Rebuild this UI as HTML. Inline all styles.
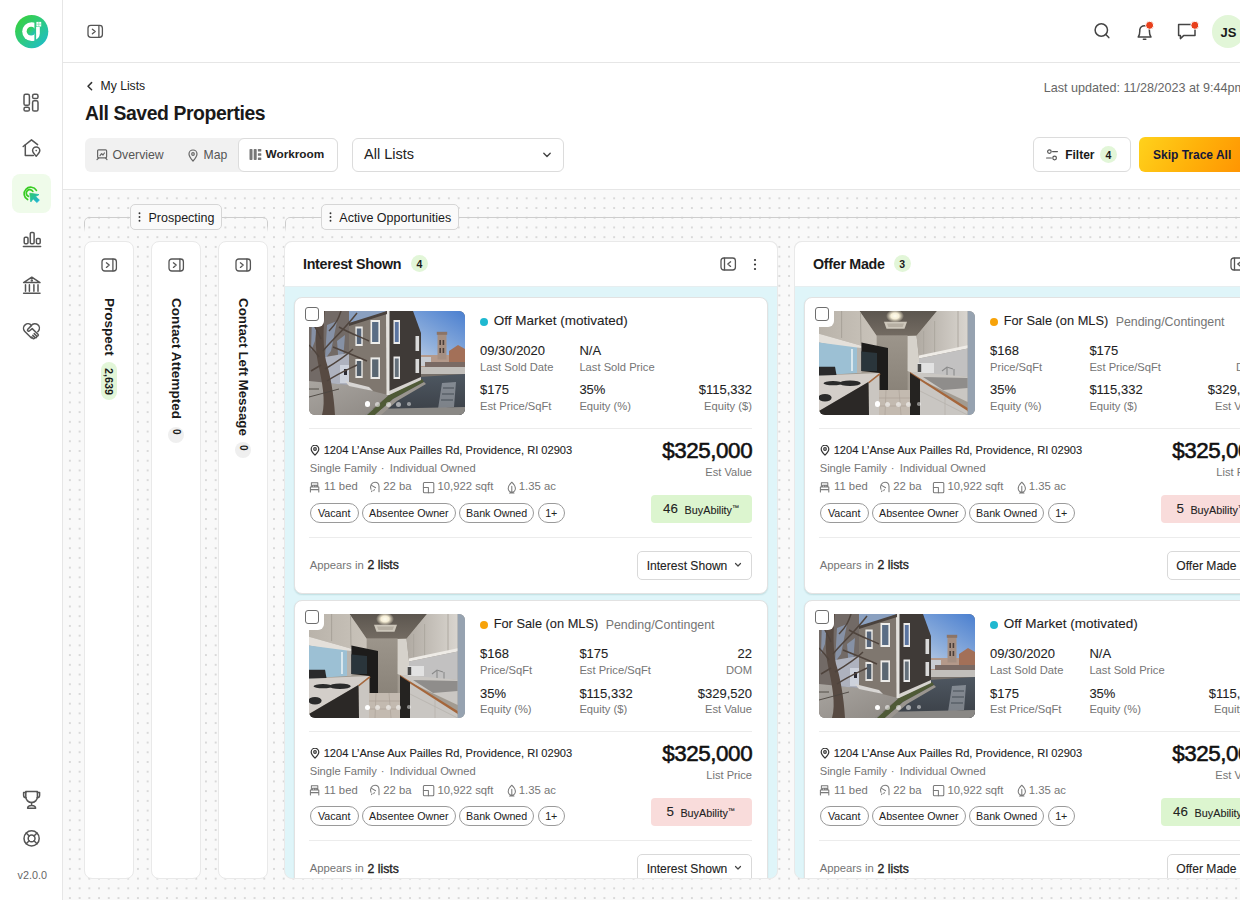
<!DOCTYPE html>
<html><head><meta charset="utf-8">
<style>
*{box-sizing:border-box;margin:0;padding:0}
html,body{width:1240px;height:900px;overflow:hidden;background:#fff;font-family:"Liberation Sans",sans-serif;color:#1a1a1a}
.a{position:absolute}
.t{position:absolute;white-space:nowrap;line-height:1}
#sidebar{position:absolute;left:0;top:0;width:63px;height:900px;background:#fff;border-right:1px solid #e6e6e6}
#topbar{position:absolute;left:63px;top:0;width:1177px;height:63px;border-bottom:1px solid #e6e6e6;background:#fff}
#ws{position:absolute;left:63px;top:189px;width:1177px;height:711px;border-top:1px solid #e6e6e6;
 background-color:#f9f9f9;
 background-image:radial-gradient(circle,#d9d9d9 0.7px,rgba(0,0,0,0) 1.05px);
 background-size:9.71875px 9.71875px;background-position:2.04px 3.44px}
.ico{position:absolute;fill:none;stroke:#555;stroke-width:1.5;stroke-linecap:round;stroke-linejoin:round}
</style></head><body>
<svg width="0" height="0" style="position:absolute">
<defs>
<linearGradient id="sky" x1="1" y1="0" x2="0.2" y2="1"><stop offset="0" stop-color="#4a7fd0"/><stop offset="0.55" stop-color="#90b0dc"/><stop offset="1" stop-color="#d6dde6"/></linearGradient>
<linearGradient id="road" x1="0" y1="0" x2="0" y2="1"><stop offset="0" stop-color="#4e5761"/><stop offset="1" stop-color="#3a3f46"/></linearGradient>
<linearGradient id="walk" x1="0" y1="0" x2="1" y2="1"><stop offset="0" stop-color="#aaa6a1"/><stop offset="1" stop-color="#8d8883"/></linearGradient>
<radialGradient id="lamp" cx="0.5" cy="0.5" r="0.5"><stop offset="0" stop-color="#fffdf0"/><stop offset="0.45" stop-color="#f6eed6"/><stop offset="1" stop-color="#f3ead0" stop-opacity="0"/></radialGradient>
<linearGradient id="ceil" x1="0" y1="0" x2="0" y2="1"><stop offset="0" stop-color="#5c564f"/><stop offset="1" stop-color="#736b62"/></linearGradient>
<linearGradient id="wall" x1="0" y1="0" x2="0" y2="1"><stop offset="0" stop-color="#9c958b"/><stop offset="1" stop-color="#8a8379"/></linearGradient>
<linearGradient id="rcab" x1="0" y1="0" x2="1" y2="0"><stop offset="0" stop-color="#b0aaa2"/><stop offset="1" stop-color="#d9d5cf"/></linearGradient>
<linearGradient id="lcab" x1="0" y1="0" x2="1" y2="0"><stop offset="0" stop-color="#b9b3aa"/><stop offset="1" stop-color="#c9c3ba"/></linearGradient>
<symbol id="house" viewBox="0 0 156 104">
<rect width="156" height="104" fill="#77706a"/>
<rect x="78" y="0" width="78" height="60" fill="url(#sky)"/>
<!-- distant buildings -->
<rect x="111" y="44" width="45" height="13" fill="#b4998a"/>
<path d="M140 40 L149 34 L156 38 V56 H140 Z" fill="#a37058"/>
<rect x="128.5" y="21.5" width="9" height="27" fill="#a58f82"/>
<rect x="127.8" y="20.8" width="10.4" height="3" fill="#8c7467"/>
<rect x="130.4" y="29" width="1.6" height="5" fill="#4c3f3a"/><rect x="133.6" y="29" width="1.6" height="5" fill="#4c3f3a"/>
<rect x="130.4" y="37" width="1.6" height="5" fill="#4c3f3a"/><rect x="133.6" y="37" width="1.6" height="5" fill="#4c3f3a"/>
<rect x="112" y="46" width="10" height="9" fill="#c8ccd2"/>
<rect x="116" y="51" width="40" height="5" fill="#7a6a64"/>
<!-- far sidewalk / road -->
<path d="M111 56 H156 V63 H111 Z" fill="#c2bfbb"/>
<path d="M62 104 L110 66 L156 63 V104 Z" fill="url(#road)"/>
<path d="M133 72 L147 71 L145 96 L129 98 Z" fill="#c9ced4" opacity="0.45"/>
<path d="M134 77 H145 M133 83 H145 M132 89 H144" stroke="#4a525a" stroke-width="1.6" opacity="0.7"/>
<path d="M60 98 L156 96 V104 H56 Z" fill="#8a8885"/>
<!-- sidewalk left -->
<path d="M0 70 L40 68 L80 84 L56 104 H0 Z" fill="url(#walk)"/>
<path d="M58 104 L80 84 L113 68 L115 71 L84 88 L66 104 Z" fill="#4f5a36"/>
<path d="M66 104 L84 88 L115 71 L117 73 L88 90 L72 104 Z" fill="#9a958f"/>
<!-- house front face -->
<path d="M40 12 L78 0 L79 84 L40 74 Z" fill="#7f776f"/>
<!-- house side face -->
<path d="M80 0 H104 L112 22 V68 L80 82 Z" fill="#3f3a37"/>
<path d="M77 0 H80.5 V84 H77.5 Z" fill="#e4e2de"/>
<path d="M80 80 L112 66 V69 L80 84 Z" fill="#d6d3cf"/>
<!-- windows front -->
<rect x="46.4" y="15.5" width="7.3" height="19.5" fill="#ecebe8"/><rect x="47.8" y="17.5" width="4.5" height="15.5" fill="#56657a"/>
<rect x="61.5" y="9" width="9.5" height="24" fill="#efeeeb"/><rect x="63.1" y="11" width="6.3" height="20" fill="#5a6d85"/>
<rect x="46.4" y="48" width="7.3" height="19" fill="#e8e7e4"/><rect x="47.8" y="50" width="4.5" height="15" fill="#505c68"/>
<rect x="61.5" y="46.4" width="9.5" height="21.6" fill="#ecebe8"/><rect x="63.1" y="48.4" width="6.3" height="17.6" fill="#5a6772"/>
<!-- windows side -->
<rect x="84.5" y="9" width="6.5" height="24" fill="#ebebeb"/><rect x="85.8" y="11" width="3.9" height="20" fill="#5a74a0"/>
<rect x="84.5" y="45.5" width="6.5" height="22.5" fill="#ebebeb"/><rect x="85.8" y="47.5" width="3.9" height="18.5" fill="#636f7a"/>
<rect x="106.5" y="25" width="3.6" height="15" fill="#dadada"/><rect x="106.5" y="48" width="3.6" height="14" fill="#dadada"/>
<!-- tree region -->
<path d="M0 0 H78 V3 L40 12 V74 L0 70 Z" fill="#726a66"/>
<path d="M40 0 H78 L60 7 L40 12 Z" fill="#8aa0c0"/><path d="M40 12 L78 0 V3 L40 15 Z" fill="#4a423d"/>
<path d="M3 4 L10 2 L6 30 L2 40 Z M18 14 L28 10 L22 40 L16 48 Z M28 30 L36 24 L34 50 L30 56 Z" fill="#8b9bb5" opacity="0.8"/>
<path d="M16 46 L40 42 V74 L16 72 Z" fill="#aeb2be"/>
<rect x="31" y="54" width="9" height="18" fill="#cdd2dc"/><rect x="35" y="58" width="3" height="6" fill="#2b2b33"/>
<path d="M36 70 L60 76 L64 80 L40 75 Z" fill="#d8d6d4"/>
<path d="M13 104 C17 90 13 70 9 52 C6 38 6 18 9 0 H16 C14 18 14 36 17 50 C21 62 25 84 26 104 Z" fill="#574a42"/>
<path d="M14 40 C22 30 34 20 48 2 M12 28 C8 18 2 10 0 6 M16 58 C26 52 36 46 44 38 M10 46 C6 40 2 36 0 34 M20 20 C28 12 30 6 32 0 M18 70 C30 62 40 58 48 54 M30 16 C40 22 52 26 60 30 M24 36 C34 40 44 44 58 50 M2 60 L12 54" stroke="#4f443d" stroke-width="1.5" fill="none"/>
<path d="M0 78 H10 M0 86 L30 78" stroke="#4b4540" stroke-width="0.9"/>
</symbol>
<symbol id="kitchen" viewBox="0 0 156 104">
<rect width="156" height="104" fill="#a29b91"/>
<path d="M40.5 0 H118 L97.5 24.7 H57.6 Z" fill="url(#ceil)"/>
<rect x="57.6" y="24.5" width="31" height="55" fill="url(#wall)"/>
<path d="M88.6 25 L97.5 24.7 L100 47 V62 L91 61 L88.6 60 Z" fill="#d6d2cb"/>
<ellipse cx="76" cy="5" rx="9" ry="6.5" fill="url(#lamp)"/>
<path d="M65 10.8 H88 L85.5 17.7 H67.5 Z" fill="#cdc7bb"/>
<path d="M68 12.5 H85 L83.6 16 H69.4 Z" fill="#b6afa3"/>
<!-- left upper cabinets -->
<path d="M0 0 H40.5 L57.6 24.7 V39 L0 22.8 Z" fill="url(#lcab)"/>
<path d="M22.6 0 V27 M41.5 1 L42 33" stroke="#a59f96" stroke-width="0.9"/>
<path d="M0 22.8 L57.6 39 L50 41 L0 31.6 Z" fill="#e4e0da"/>
<!-- left window -->
<path d="M0 31.6 L38 36.5 V62 L0 64.6 Z" fill="#9cc0d4"/>
<path d="M33 38 V60" stroke="#e8f0f4" stroke-width="1.6"/>
<path d="M38 36.5 L42.4 37 V62 L38 62 Z" fill="#b8b4ae"/>
<!-- fridge -->
<path d="M42.4 31.6 L69 37 V88.6 L61 90 L60.8 62 L42.4 60 Z" fill="#1d1c1b"/>
<path d="M42.4 40.5 L58 42 V60 L42.4 60 Z" fill="#2a353b"/>
<!-- floor -->
<path d="M54.4 79 H91 L100 104 H54.4 Z" fill="#c3bab0"/>
<path d="M56 87 H95 M55 95 H98 M67 79 L66 104 M80 79 L82 104" stroke="#aaa095" stroke-width="0.6"/>
<!-- left counter / stove -->
<path d="M0 64.6 L60.8 62 L49.4 70.9 L0 100 Z" fill="#d3cec9"/>
<path d="M49.4 70.9 L60.8 62 L61.5 63.5 L50.2 72.6 Z" fill="#a8683c"/>
<path d="M0 55.7 H16 L17.5 64 L0 64.6 Z" fill="#2a2a2b"/>
<ellipse cx="14" cy="72.2" rx="9.5" ry="2.1" fill="#2a2a2a"/>
<ellipse cx="31" cy="72.2" rx="10.8" ry="2.8" fill="#2a2a2a"/>
<ellipse cx="6" cy="86.7" rx="6.6" ry="3.8" fill="#2a2a2a"/>
<path d="M0 100 L49.4 71 L50 104 H0 Z" fill="#2b2826"/>
<path d="M50 72.5 L60 64.6 V104 H50 Z" fill="#cac6c1"/>
<!-- right upper cabinets -->
<path d="M97.5 24.7 L118 0 H148.7 V36.7 L100 46.8 Z" fill="url(#rcab)"/>
<path d="M104.6 20 V45 M115.6 10 V42 M139 0 V37" stroke="#aaa59d" stroke-width="0.9"/>
<path d="M100 44.5 L148.7 34.2 V37.5 L100 47.5 Z" fill="#eeebe6"/>
<!-- right backsplash -->
<path d="M100 47.5 L148.7 37.5 V66 L100 63 Z" fill="#c2c1c1"/>
<rect x="98.7" y="52" width="16.3" height="10" fill="#e2e2e2"/><rect x="98.7" y="53" width="3.5" height="8" fill="#4a4a4a"/>
<path d="M123 60 L128 56 L134 58 M128 56 V66 M135 58 V66" stroke="#8a8a8a" stroke-width="1.1" fill="none"/>
<!-- right counter -->
<path d="M91 60.8 L148.7 65.8 V91 L101 68.4 Z" fill="#cac7c3"/>
<path d="M104 66 L148.7 67 V77 L124 79 Z" fill="#8f8d8b"/>
<path d="M91 61 L148.7 97 V101 L91 64.5 Z" fill="#a5663b"/>
<path d="M101 69.5 L148.7 100 V104 H101 Z" fill="#c9c6c2"/>
<path d="M126 86 V104 M101 80 L148.7 104" stroke="#b4b0aa" stroke-width="0.7"/>
<path d="M91 62 L101 68.5 V104 H91 Z" fill="#252321"/>
<path d="M148.7 0 H156 V104 H148.7 Z" fill="#96a2b0"/>
</symbol>
</defs></svg>


<div id="sidebar">
<svg class="a" style="left:0;top:0" width="62" height="62" viewBox="0 0 62 62">
<defs><linearGradient id="lg" x1="0" y1="0" x2="1" y2="1"><stop offset="0" stop-color="#3ad12f"/><stop offset="0.55" stop-color="#2bc98a"/><stop offset="1" stop-color="#1cb9d6"/></linearGradient>
<clipPath id="lc"><rect x="0" y="0" width="34.4" height="62"/></clipPath></defs>
<circle cx="31.7" cy="31.6" r="16.6" fill="url(#lg)"/>
<circle cx="31.6" cy="31.6" r="9.4" fill="#fff" clip-path="url(#lc)"/>
<circle cx="31.1" cy="31.2" r="4.4" fill="url(#lg)"/>
<path d="M36.1 27 H39.8 V33.5 Q39.4 38 36.1 39.6 Z" fill="#fff"/>
<rect x="36.4" y="21.9" width="4.8" height="4.6" fill="#fff"/>
<path d="M38.8 21.9 V26.5 M36.4 24.2 H41.2" stroke="#7fdcae" stroke-width="0.7"/>
</svg>
<svg class="ico" style="left:0;top:80" width="62" height="40" viewBox="0 80 62 40">
<rect x="24" y="94.3" width="5.4" height="11" rx="1.6"/><rect x="24" y="107.3" width="5.4" height="3.8" rx="1.6"/>
<rect x="32.6" y="94.3" width="5.4" height="4.2" rx="1.6"/><rect x="32.6" y="100.8" width="5.4" height="10.3" rx="1.6"/>
</svg>
<svg class="ico" style="left:0;top:130" width="62" height="36" viewBox="0 130 62 36">
<path d="M23.2 146.5 L31.5 139.8 L37.6 144.6"/><path d="M25.3 145 V155.4 H33.3"/>
<path d="M36.2 156.2 C33.8 153.8 32.6 152.3 32.6 150.6 A3.6 3.6 0 0 1 39.8 150.6 C39.8 152.3 38.6 153.8 36.2 156.2 Z"/><circle cx="36.2" cy="150.6" r="0.8" fill="#555" stroke="none"/>
</svg>
<div class="a" style="left:12.4px;top:174.3px;width:38.6px;height:39px;border-radius:8px;background:#effbea"></div>
<svg class="a" style="left:0;top:170" width="62" height="50" viewBox="0 170 62 50">
<defs><linearGradient id="ag" x1="0" y1="0" x2="1" y2="1"><stop offset="0" stop-color="#30c96a"/><stop offset="1" stop-color="#18b2e0"/></linearGradient></defs>
<path d="M27.6 199.6 A6.6 6.6 0 1 1 36.4 190.4" fill="none" stroke="#37cc22" stroke-width="1.7" stroke-linecap="round"/>
<path d="M28.4 196.4 A3.5 3.5 0 1 1 32.8 191.4" fill="none" stroke="#37cc22" stroke-width="1.7" stroke-linecap="round"/>
<path d="M29.8 193.2 L39 194.6 L35.6 196.5 L39.4 200.1 L36.9 202.5 L33.2 198.9 L30.8 201.9 Z" fill="url(#ag)" stroke="url(#ag)" stroke-width="0.8" stroke-linejoin="round"/>
</svg>
<svg class="ico" style="left:0;top:225" width="62" height="30" viewBox="0 225 62 30">
<rect x="24.2" y="237.2" width="3.8" height="6.6" rx="1.2"/><rect x="30.3" y="232.4" width="3.8" height="11.4" rx="1.2"/><rect x="36.4" y="238.4" width="3.8" height="5.4" rx="1.2"/>
<path d="M23.4 246.4 H40.6"/>
</svg>
<svg class="ico" style="left:0;top:270" width="62" height="30" viewBox="0 270 62 30">
<path d="M23.6 282.6 L31.8 277.2 L40 282.6 Z"/><path d="M25.5 284.8 V291.2 M29.4 284.8 V291.2 M33.9 284.8 V291.2 M38 284.8 V291.2 M23.6 293.2 H40"/>
<circle cx="31.8" cy="280.6" r="0.5" fill="#555"/>
</svg>
<svg class="ico" style="left:0;top:315" width="62" height="30" viewBox="0 315 62 30">
<path d="M31.4 338 L24.6 331.2 A4.4 4.4 0 0 1 31.4 325.4 A4.4 4.4 0 0 1 38.4 331 L37.8 331.6"/>
<path d="M31.4 325.6 L27.8 329.2 A1.2 1.2 0 0 0 29.6 330.8 L32.2 328.6 L38 334.2 A1.1 1.1 0 0 1 36.4 335.8 M36.4 335.8 L34.2 333.6 M36.4 335.8 A1.1 1.1 0 0 1 34.8 337.4 L32.8 335.4 M34.8 337.4 A1.1 1.1 0 0 1 33.2 338.6 L31.6 337"/>
</svg>
<svg class="ico" style="left:0;top:785" width="62" height="30" viewBox="0 785 62 30">
<path d="M25.8 791.5 H37.4 V796.8 A5.8 5.8 0 0 1 25.8 796.8 Z"/><path d="M25.8 792.4 H23.6 V795.2 A2.6 2.6 0 0 0 26 797.8 M37.4 792.4 H39.6 V795.2 A2.6 2.6 0 0 1 37.2 797.8"/>
<path d="M31.6 802.6 V805.4 M27.6 808.2 A4 2.8 0 0 1 35.6 808.2 Z"/>
</svg>
<svg class="ico" style="left:0;top:825" width="62" height="30" viewBox="0 825 62 30">
<circle cx="31.6" cy="838.4" r="7.6"/><circle cx="31.6" cy="838.4" r="3.4"/>
<path d="M29.2 836 L26.2 833 M34 836 L37 833 M29.2 840.8 L26.2 843.8 M34 840.8 L37 843.8"/>
</svg>
<div class="t" style="left:17.5px;top:870px;font-size:10.8px;color:#666;">v2.0.0</div>
</div>
<div id="topbar">
<svg class="ico" style="left:0;top:0;stroke-width:1.3;stroke:#555" width="60" height="62" viewBox="63 0 60 62">
<rect x="88" y="25.4" width="14.4" height="12" rx="2.8"/><path d="M98.9 25.6 V37.2"/><path d="M92.4 29.2 L95.2 31.5 L92.4 33.8"/>
</svg>
<svg class="ico" style="left:1020px;top:0;stroke:#444;stroke-width:1.5" width="157" height="62" viewBox="1083 0 157 62">
<circle cx="1101.3" cy="30" r="6.2"/><path d="M1105.8 34.5 L1108.8 37.6"/>
<path d="M1138.2 37 H1151 C1149.6 35.4 1149.4 34 1149.4 31 V29.6 A4.9 4.9 0 0 0 1139.8 29.6 V31 C1139.8 34 1139.6 35.4 1138.2 37 Z"/><path d="M1143.4 39.2 H1145.8"/>
<path d="M1178.6 24.6 H1195 V35.6 H1183.6 L1180.4 38.6 V35.6 H1178.6 Z"/>
<circle cx="1149.6" cy="25.3" r="4" fill="#e8401c" stroke="#fff" stroke-width="1"/>
<circle cx="1194.8" cy="25.3" r="4" fill="#e8401c" stroke="#fff" stroke-width="1"/>
</svg>
<div class="a" style="left:1148.5px;top:15px;width:32.5px;height:32.5px;border-radius:50%;background:#e2f6d8"></div>
<div class="t" style="left:1157.5px;top:26px;font-size:13px;font-weight:700;color:#1a1a1a">JS</div>
</div>
<div id="header">
<svg class="ico" style="left:80px;top:76px;stroke:#333;stroke-width:1.5" width="16" height="20" viewBox="80 76 16 20">
<path d="M91.6 82.6 L88 86.2 L91.6 89.8"/></svg>
<div class="t" style="left:100.5px;top:80px;font-size:12.2px;color:#222">My Lists</div>
<div class="t" style="left:85px;top:104.1px;font-size:19.4px;font-weight:700;letter-spacing:-0.42px;color:#1a1a1a">All Saved Properties</div>
<div class="a" style="left:85px;top:137.5px;width:253px;height:34.5px;border-radius:6px;background:#f1f1f1"></div>
<div class="a" style="left:238px;top:137.5px;width:100px;height:34.5px;border-radius:6px;background:#fff;border:1px solid #dcdcdc"></div>
<svg class="ico" style="left:0;top:130px;stroke:#666;stroke-width:1.2" width="340" height="50" viewBox="0 130 340 50">
<rect x="97.6" y="149.8" width="9" height="8" rx="1"/><path d="M97 159.6 L98.6 158 M107 159.6 L105.6 158 M100 155.6 L101.6 153.6 L103 155 L104.4 153"/>
<path d="M193 161 C190.4 158.2 189 156.2 189 154 A4 4 0 0 1 197 154 C197 156.2 195.6 158.2 193 161 Z"/><circle cx="193" cy="154" r="1.3"/>
</svg>
<svg class="a" style="left:249px;top:148px" width="13" height="13" viewBox="0 0 13 13">
<rect x="0.5" y="1" width="3" height="11" rx="0.8" fill="#777"/><rect x="4.7" y="1" width="3" height="11" rx="0.8" fill="#777"/>
<rect x="8.9" y="1" width="3.4" height="2.6" rx="0.6" fill="#777"/><rect x="8.9" y="5.2" width="3.4" height="2.6" rx="0.6" fill="#777"/><rect x="8.9" y="9.4" width="3.4" height="2.6" rx="0.6" fill="#777"/>
</svg>
<div class="t" style="left:112.5px;top:149px;font-size:12.3px;color:#555">Overview</div>
<div class="t" style="left:203.5px;top:149px;font-size:12.2px;color:#555">Map</div>
<div class="t" style="left:265.5px;top:149px;font-size:11.8px;font-weight:700;color:#222">Workroom</div>
<div class="a" style="left:352px;top:137.5px;width:211.5px;height:34.5px;border-radius:6px;background:#fff;border:1px solid #dcdcdc"></div>
<div class="t" style="left:364px;top:147px;font-size:14.5px;color:#222">All Lists</div>
<svg class="ico" style="left:540px;top:148px;stroke:#444;stroke-width:1.4" width="14" height="14" viewBox="0 0 14 14"><path d="M3.8 5.2 L7 8.4 L10.2 5.2"/></svg>
<div class="t" style="left:1043.7px;top:82px;font-size:12.6px;color:#666">Last updated: 11/28/2023 at 9:44pm</div>
<div class="a" style="left:1033.3px;top:137.4px;width:98px;height:34.4px;border-radius:6px;background:#fff;border:1px solid #dcdcdc"></div>
<svg class="ico" style="left:1045px;top:148px;stroke:#555;stroke-width:1.2" width="14" height="14" viewBox="0 0 14 14">
<circle cx="4.4" cy="3.6" r="1.8"/><path d="M7.6 3.6 H12.4"/><circle cx="9.6" cy="10" r="1.8"/><path d="M1.6 10 H6.4"/></svg>
<div class="t" style="left:1065.2px;top:149.2px;font-size:12px;font-weight:700;color:#1a1a1a">Filter</div>
<div class="a" style="left:1100px;top:146.3px;width:17px;height:17px;border-radius:50%;background:#e2f6d8"></div>
<div class="t" style="left:1105.6px;top:150.3px;font-size:10.5px;font-weight:700;color:#1a1a1a">4</div>
<div class="a" style="left:1138.6px;top:137.4px;width:120px;height:34.4px;border-radius:6px;background:linear-gradient(120deg,#ffd21c 0%,#ffb20a 45%,#ff8c00 100%)"></div>
<div class="t" style="left:1153px;top:149.2px;font-size:12px;font-weight:700;color:#15173a">Skip Trace All</div>
</div>
<div id="ws"></div>
<div class="a" style="left:84.00px;top:217.00px;width:183.50px;height:15.00px;border:1px solid #cdcdcd;border-bottom:none;border-radius:5px 5px 0 0;-webkit-mask-image:linear-gradient(#000 60%,transparent)"></div>
<div class="a" style="left:284.50px;top:217.00px;width:975.50px;height:15.00px;border:1px solid #cdcdcd;border-bottom:none;border-radius:5px 5px 0 0;-webkit-mask-image:linear-gradient(#000 60%,transparent)"></div>
<div class="a" style="left:129.70px;top:204.20px;width:92.30px;height:25.40px;background:#fafafa;border:1px solid #d6d6d6;border-radius:5px"></div><svg class="a" style="left:135.70px;top:210px" width="8" height="14" viewBox="0 0 8 14"><circle cx="3.5" cy="3.2" r="0.95" fill="#333"/><circle cx="3.5" cy="7" r="0.95" fill="#333"/><circle cx="3.5" cy="10.8" r="0.95" fill="#333"/></svg><div class="t" style="left:148.50px;top:212.02px;font-size:12.5px;font-weight:400;color:#1a1a1a;">Prospecting</div>
<div class="a" style="left:320.50px;top:204.20px;width:138.00px;height:25.40px;background:#fafafa;border:1px solid #d6d6d6;border-radius:5px"></div><svg class="a" style="left:326.50px;top:210px" width="8" height="14" viewBox="0 0 8 14"><circle cx="3.5" cy="3.2" r="0.95" fill="#333"/><circle cx="3.5" cy="7" r="0.95" fill="#333"/><circle cx="3.5" cy="10.8" r="0.95" fill="#333"/></svg><div class="t" style="left:339.30px;top:212.02px;font-size:12.5px;font-weight:400;color:#1a1a1a;">Active Opportunities</div>
<div class="a" style="left:84.00px;top:240.50px;width:50.00px;height:638.50px;background:#fff;border:1px solid #e9e9e9;border-radius:8px"></div><svg class="ico" style="left:100.80px;top:258.4px;stroke:#555;stroke-width:1.3" width="17" height="15" viewBox="0 0 17 15"><rect x="1" y="1" width="14.4" height="12" rx="2.8"/><path d="M11.9 1.2 V12.8"/><path d="M5.4 4.8 L8.2 7.1 L5.4 9.4"/></svg><div class="t" style="left:102.25px;top:297.8px;writing-mode:vertical-rl;font-size:13.5px;font-weight:700;color:#1a1a1a;line-height:13.5px">Prospect</div><div class="a" style="left:100.80px;top:362.10px;width:16.40px;height:38.00px;background:#e2f6d8;border-radius:8px"></div><div class="t" style="left:103.60px;top:367.90px;writing-mode:vertical-rl;font-size:10.8px;font-weight:700;color:#1a1a1a;line-height:10.8px">2,639</div>
<div class="a" style="left:151.00px;top:240.50px;width:50.00px;height:638.50px;background:#fff;border:1px solid #e9e9e9;border-radius:8px"></div><svg class="ico" style="left:167.80px;top:258.4px;stroke:#555;stroke-width:1.3" width="17" height="15" viewBox="0 0 17 15"><rect x="1" y="1" width="14.4" height="12" rx="2.8"/><path d="M11.9 1.2 V12.8"/><path d="M5.4 4.8 L8.2 7.1 L5.4 9.4"/></svg><div class="t" style="left:169.20px;top:297.8px;writing-mode:vertical-rl;font-size:13.6px;font-weight:700;color:#1a1a1a;line-height:13.6px">Contact Attempted</div><div class="a" style="left:167.80px;top:426.50px;width:16.40px;height:16.40px;background:#efefef;border-radius:50%"></div><div class="t" style="left:171.00px;top:429.30px;writing-mode:vertical-rl;font-size:10px;font-weight:700;color:#1a1a1a;line-height:10px">0</div>
<div class="a" style="left:218.00px;top:240.50px;width:50.00px;height:638.50px;background:#fff;border:1px solid #e9e9e9;border-radius:8px"></div><svg class="ico" style="left:234.80px;top:258.4px;stroke:#555;stroke-width:1.3" width="17" height="15" viewBox="0 0 17 15"><rect x="1" y="1" width="14.4" height="12" rx="2.8"/><path d="M11.9 1.2 V12.8"/><path d="M5.4 4.8 L8.2 7.1 L5.4 9.4"/></svg><div class="t" style="left:236.32px;top:297.8px;writing-mode:vertical-rl;font-size:13.35px;font-weight:700;color:#1a1a1a;line-height:13.35px">Contact Left Message</div><div class="a" style="left:234.80px;top:442.00px;width:16.40px;height:16.40px;background:#efefef;border-radius:50%"></div><div class="t" style="left:238.00px;top:444.80px;writing-mode:vertical-rl;font-size:10px;font-weight:700;color:#1a1a1a;line-height:10px">0</div>
<div class="a" style="left:0;top:0;width:1240px;height:879px;clip-path:inset(240px 0 0 0)">
<div class="a" style="left:283.90px;top:240.50px;width:494.00px;height:638.50px;background:#dff5f9;border:1px solid #e9e9e9;border-radius:8px;overflow:hidden"></div><div class="a" style="left:283.90px;top:240.50px;width:494.00px;height:46.00px;background:#fff;border:1px solid #e9e9e9;border-bottom:1px solid #e6eef0;border-radius:8px 8px 0 0"></div><div class="t" style="left:303.00px;top:257.10px;font-size:14.3px;font-weight:700;color:#1a1a1a;letter-spacing:-0.3px">Interest Shown</div><div class="a" style="left:411.10px;top:255.10px;width:17.00px;height:17.00px;background:#e2f6d8;border-radius:50%"></div><div class="t" style="left:416.60px;top:258.71px;font-size:10.5px;font-weight:700;color:#1a1a1a;">4</div><svg class="ico" style="left:719.50px;top:256.6px;stroke:#555;stroke-width:1.3" width="17" height="15" viewBox="0 0 17 15"><rect x="1" y="1" width="14.4" height="12" rx="2.8"/><path d="M4.5 1.2 V12.8"/><path d="M10.6 4.8 L7.8 7.1 L10.6 9.4"/></svg><svg class="a" style="left:750.50px;top:256.6px" width="8" height="15" viewBox="0 0 8 15"><circle cx="4" cy="3" r="1.1" fill="#333"/><circle cx="4" cy="7.5" r="1.1" fill="#333"/><circle cx="4" cy="12" r="1.1" fill="#333"/></svg>
<div class="a" style="left:793.90px;top:240.50px;width:494.00px;height:638.50px;background:#dff5f9;border:1px solid #e9e9e9;border-radius:8px;overflow:hidden"></div><div class="a" style="left:793.90px;top:240.50px;width:494.00px;height:46.00px;background:#fff;border:1px solid #e9e9e9;border-bottom:1px solid #e6eef0;border-radius:8px 8px 0 0"></div><div class="t" style="left:813.00px;top:257.10px;font-size:14.3px;font-weight:700;color:#1a1a1a;letter-spacing:-0.3px">Offer Made</div><div class="a" style="left:893.70px;top:255.10px;width:17.00px;height:17.00px;background:#e2f6d8;border-radius:50%"></div><div class="t" style="left:899.20px;top:258.71px;font-size:10.5px;font-weight:700;color:#1a1a1a;">3</div><svg class="ico" style="left:1229.50px;top:256.6px;stroke:#555;stroke-width:1.3" width="17" height="15" viewBox="0 0 17 15"><rect x="1" y="1" width="14.4" height="12" rx="2.8"/><path d="M4.5 1.2 V12.8"/><path d="M10.6 4.8 L7.8 7.1 L10.6 9.4"/></svg><svg class="a" style="left:1260.50px;top:256.6px" width="8" height="15" viewBox="0 0 8 15"><circle cx="4" cy="3" r="1.1" fill="#333"/><circle cx="4" cy="7.5" r="1.1" fill="#333"/><circle cx="4" cy="12" r="1.1" fill="#333"/></svg>
</div>
<div class="a" style="left:284.5px;top:286.5px;width:492.5px;height:591.5px;overflow:hidden;border-radius:0 0 8px 8px">
<div class="a" style="left:9.90px;top:10.50px;width:473.20px;height:297px;background:#fff;border:1px solid #e2e2e2;border-radius:8px;box-shadow:0 1px 1.5px rgba(0,90,90,0.14)"><div class="a" style="left:0.6px;top:-1px;width:471px;height:296px"><div class="a" style="left:13.5px;top:14px;width:156px;height:104px;border-radius:6px;overflow:hidden"><svg width="156" height="104" viewBox="0 0 156 104"><use href="#house"/></svg></div><div class="a" style="left:69.00px;top:104.40px;width:5.2px;height:5.2px;border-radius:50%;background:rgba(255,255,255,1)"></div><div class="a" style="left:79.50px;top:104.50px;width:5.0px;height:5.0px;border-radius:50%;background:rgba(255,255,255,0.55)"></div><div class="a" style="left:90.00px;top:104.50px;width:5.0px;height:5.0px;border-radius:50%;background:rgba(255,255,255,0.55)"></div><div class="a" style="left:100.50px;top:104.50px;width:5.0px;height:5.0px;border-radius:50%;background:rgba(255,255,255,0.55)"></div><div class="a" style="left:111.20px;top:105.20px;width:3.6px;height:3.6px;border-radius:50%;background:rgba(255,255,255,0.45)"></div><div class="a" style="left:13.5px;top:14px;width:15px;height:15.5px;background:#fff;border-bottom-right-radius:6px"></div><div class="a" style="left:9.5px;top:10px;width:13.8px;height:13.8px;border:1.5px solid #6e6e6e;border-radius:3px;background:#fff"></div><div class="a" style="left:184px;top:20.8px;width:8px;height:8px;border-radius:50%;background:#1fb8d0"></div><div class="t" style="left:197.70px;top:17.17px;font-size:13.5px;font-weight:400;color:#1f1f1f;;-webkit-text-stroke:0.1px #1f1f1f">Off Market (motivated)</div><div class="t" style="left:184.00px;top:47.20px;font-size:13px;font-weight:400;color:#1f1f1f;;-webkit-text-stroke:0.1px #1f1f1f">09/30/2020</div><div class="t" style="left:184.00px;top:64.52px;font-size:11.2px;font-weight:400;color:#757575;">Last Sold Date</div><div class="t" style="left:283.40px;top:47.20px;font-size:13px;font-weight:400;color:#1f1f1f;;-webkit-text-stroke:0.1px #1f1f1f">N/A</div><div class="t" style="left:283.40px;top:64.52px;font-size:11.2px;font-weight:400;color:#757575;">Last Sold Price</div><div class="t" style="left:184.00px;top:86.40px;font-size:13px;font-weight:400;color:#1f1f1f;;-webkit-text-stroke:0.1px #1f1f1f">$175</div><div class="t" style="left:184.00px;top:103.52px;font-size:11.2px;font-weight:400;color:#757575;">Est Price/SqFt</div><div class="t" style="left:283.40px;top:86.40px;font-size:13px;font-weight:400;color:#1f1f1f;;-webkit-text-stroke:0.1px #1f1f1f">35%</div><div class="t" style="left:283.40px;top:103.52px;font-size:11.2px;font-weight:400;color:#757575;">Equity (%)</div><div class="t" style="right:15.00px;top:86.40px;font-size:13px;font-weight:400;color:#1f1f1f;;-webkit-text-stroke:0.1px #1f1f1f">$115,332</div><div class="t" style="right:15.00px;top:103.52px;font-size:11.2px;font-weight:400;color:#757575;">Equity ($)</div><div class="a" style="left:13.50px;top:131.20px;width:442.50px;height:1.00px;background:#ececec"></div><svg class="ico" style="left:14px;top:148px;stroke:#333;stroke-width:1.2" width="10" height="11" viewBox="0 0 10 11"><path d="M5 10.2 C2.4 7.6 1.2 5.8 1.2 4 A3.8 3.8 0 0 1 8.8 4 C8.8 5.8 7.6 7.6 5 10.2 Z"/><circle cx="5" cy="4" r="1.3"/></svg><div class="t" style="left:27.70px;top:147.60px;font-size:11.1px;font-weight:400;color:#222;;-webkit-text-stroke:0.1px #222">1204 L’Anse Aux Pailles Rd, Providence, RI 02903</div><div class="t" style="left:13.70px;top:165.72px;font-size:11.2px;font-weight:400;color:#757575;">Single Family</div><div class="t" style="left:84.80px;top:165.72px;font-size:11.2px;font-weight:400;color:#757575;">·</div><div class="t" style="left:93.80px;top:165.72px;font-size:11.2px;font-weight:400;color:#757575;">Individual Owned</div>
<svg class="ico" style="left:13px;top:184px;stroke:#7a7a7a;stroke-width:1.05" width="260" height="14" viewBox="309 481 260 14">
<path d="M310.4 492 V487 H318.8 V492 M310.4 489.6 H318.8 M311.4 487 V482.8 H317.8 V487 M312.6 487 V485.2 H314.6 V487 M315 487 V485.2 H316.8 V487"/>
<path d="M371 489.2 C369.8 486 371.4 482.2 375 482.2 C377.6 482.2 379 484 379 486.4 V491.8 M372 485.6 L375.6 487.8 M371.6 491.6 L372 490.8 M373.8 490.6 L374.4 489.6"/>
<rect x="423.4" y="482.4" width="10.4" height="10.4" rx="1"/><path d="M423.4 487.4 H428.4 V492.8"/>
<path d="M511.8 482.2 C509 484.8 508.2 487.2 508.2 488.6 A3.6 3.6 0 0 0 515.4 488.6 C515.4 487.2 514.6 484.8 511.8 482.2 Z M511.8 486.2 V493 M509.6 493 H514"/>
</svg><div class="t" style="left:28.00px;top:184.43px;font-size:11.3px;font-weight:400;color:#757575;">11 bed</div><div class="t" style="left:87.30px;top:184.43px;font-size:11.3px;font-weight:400;color:#757575;">22 ba</div><div class="t" style="left:141.50px;top:184.43px;font-size:11.3px;font-weight:400;color:#757575;">10,922 sqft</div><div class="t" style="left:222.80px;top:184.43px;font-size:11.3px;font-weight:400;color:#757575;">1.35 ac</div><div class="a" style="left:13.70px;top:205.50px;width:48.90px;height:20.00px;border:1px solid #9a9a9a;border-radius:10px;background:#fff"></div><div class="t" style="left:13.70px;width:48.90px;text-align:center;top:210.54px;font-size:10.7px;color:#222">Vacant</div><div class="a" style="left:65.70px;top:205.50px;width:94.30px;height:20.00px;border:1px solid #9a9a9a;border-radius:10px;background:#fff"></div><div class="t" style="left:65.70px;width:94.30px;text-align:center;top:210.54px;font-size:10.7px;color:#222">Absentee Owner</div><div class="a" style="left:163.20px;top:205.50px;width:75.00px;height:20.00px;border:1px solid #9a9a9a;border-radius:10px;background:#fff"></div><div class="t" style="left:163.20px;width:75.00px;text-align:center;top:210.54px;font-size:10.7px;color:#222">Bank Owned</div><div class="a" style="left:241.60px;top:205.50px;width:27.40px;height:20.00px;border:1px solid #9a9a9a;border-radius:10px;background:#fff"></div><div class="t" style="left:241.60px;width:27.40px;text-align:center;top:210.54px;font-size:10.7px;color:#222">1+</div><div class="t" style="right:14.80px;top:143.04px;font-size:22.4px;font-weight:400;color:#111;-webkit-text-stroke:0.55px #111;letter-spacing:-0.42px">$325,000</div><div class="t" style="right:15.00px;top:170.10px;font-size:11.1px;font-weight:400;color:#757575;">Est Value</div><div class="a" style="left:355.00px;top:198.00px;width:101.20px;height:28.00px;background:#dcf5cf;border-radius:4px"></div><div class="t" style="left:367.00px;top:205.24px;font-size:13.3px;font-weight:400;color:#222;;-webkit-text-stroke:0.1px #222">46</div><div class="t" style="left:388.60px;top:206.86px;font-size:10.8px;font-weight:400;color:#222;;-webkit-text-stroke:0.1px #222">BuyAbility<span style="font-size:7px;vertical-align:3.5px">™</span></div><div class="a" style="left:13.50px;top:240.00px;width:442.50px;height:1.00px;background:#ececec"></div><div class="t" style="left:13.70px;top:263.23px;font-size:11.3px;font-weight:400;color:#757575;">Appears in</div><div class="t" style="left:71.60px;top:262.47px;font-size:12.2px;font-weight:400;color:#222;-webkit-text-stroke:0.35px #222">2 lists</div><div class="a" style="left:341.50px;top:254.00px;width:114.10px;height:28.50px;border:1px solid #d9d9d9;border-radius:5px;background:#fff"></div><div class="t" style="left:350.70px;top:262.56px;font-size:12.1px;font-weight:400;color:#222;;-webkit-text-stroke:0.1px #222">Interest Shown</div><svg class="ico" style="left:437.00px;top:264px;stroke:#444;stroke-width:1.2" width="10" height="8" viewBox="0 0 10 8"><path d="M2.5 2.5 L5 5 L7.5 2.5"/></svg></div></div>
<div class="a" style="left:9.90px;top:313.70px;width:473.20px;height:297px;background:#fff;border:1px solid #e2e2e2;border-radius:8px;box-shadow:0 1px 1.5px rgba(0,90,90,0.14)"><div class="a" style="left:0.6px;top:-1px;width:471px;height:296px"><div class="a" style="left:13.5px;top:14px;width:156px;height:104px;border-radius:6px;overflow:hidden"><svg width="156" height="104" viewBox="0 0 156 104"><use href="#kitchen"/></svg></div><div class="a" style="left:69.00px;top:104.40px;width:5.2px;height:5.2px;border-radius:50%;background:rgba(255,255,255,1)"></div><div class="a" style="left:79.50px;top:104.50px;width:5.0px;height:5.0px;border-radius:50%;background:rgba(255,255,255,0.55)"></div><div class="a" style="left:90.00px;top:104.50px;width:5.0px;height:5.0px;border-radius:50%;background:rgba(255,255,255,0.55)"></div><div class="a" style="left:100.50px;top:104.50px;width:5.0px;height:5.0px;border-radius:50%;background:rgba(255,255,255,0.55)"></div><div class="a" style="left:111.20px;top:105.20px;width:3.6px;height:3.6px;border-radius:50%;background:rgba(255,255,255,0.45)"></div><div class="a" style="left:13.5px;top:14px;width:15px;height:15.5px;background:#fff;border-bottom-right-radius:6px"></div><div class="a" style="left:9.5px;top:10px;width:13.8px;height:13.8px;border:1.5px solid #6e6e6e;border-radius:3px;background:#fff"></div><div class="a" style="left:184px;top:20.8px;width:8px;height:8px;border-radius:50%;background:#f7a30a"></div><div class="t" style="left:197.70px;top:18.16px;font-size:12.8px;font-weight:400;color:#1f1f1f;;-webkit-text-stroke:0.1px #1f1f1f">For Sale (on MLS)</div><div class="t" style="left:309.70px;top:18.80px;font-size:12.4px;font-weight:400;color:#757575;">Pending/Contingent</div><div class="t" style="left:184.00px;top:47.20px;font-size:13px;font-weight:400;color:#1f1f1f;;-webkit-text-stroke:0.1px #1f1f1f">$168</div><div class="t" style="left:184.00px;top:64.52px;font-size:11.2px;font-weight:400;color:#757575;">Price/SqFt</div><div class="t" style="left:283.40px;top:47.20px;font-size:13px;font-weight:400;color:#1f1f1f;;-webkit-text-stroke:0.1px #1f1f1f">$175</div><div class="t" style="left:283.40px;top:64.52px;font-size:11.2px;font-weight:400;color:#757575;">Est Price/SqFt</div><div class="t" style="right:15.00px;top:47.20px;font-size:13px;font-weight:400;color:#1f1f1f;;-webkit-text-stroke:0.1px #1f1f1f">22</div><div class="t" style="right:15.00px;top:64.52px;font-size:11.2px;font-weight:400;color:#757575;">DOM</div><div class="t" style="left:184.00px;top:86.40px;font-size:13px;font-weight:400;color:#1f1f1f;;-webkit-text-stroke:0.1px #1f1f1f">35%</div><div class="t" style="left:184.00px;top:103.52px;font-size:11.2px;font-weight:400;color:#757575;">Equity (%)</div><div class="t" style="left:283.40px;top:86.40px;font-size:13px;font-weight:400;color:#1f1f1f;;-webkit-text-stroke:0.1px #1f1f1f">$115,332</div><div class="t" style="left:283.40px;top:103.52px;font-size:11.2px;font-weight:400;color:#757575;">Equity ($)</div><div class="t" style="right:15.00px;top:86.40px;font-size:13px;font-weight:400;color:#1f1f1f;;-webkit-text-stroke:0.1px #1f1f1f">$329,520</div><div class="t" style="right:15.00px;top:103.52px;font-size:11.2px;font-weight:400;color:#757575;">Est Value</div><div class="a" style="left:13.50px;top:131.20px;width:442.50px;height:1.00px;background:#ececec"></div><svg class="ico" style="left:14px;top:148px;stroke:#333;stroke-width:1.2" width="10" height="11" viewBox="0 0 10 11"><path d="M5 10.2 C2.4 7.6 1.2 5.8 1.2 4 A3.8 3.8 0 0 1 8.8 4 C8.8 5.8 7.6 7.6 5 10.2 Z"/><circle cx="5" cy="4" r="1.3"/></svg><div class="t" style="left:27.70px;top:147.60px;font-size:11.1px;font-weight:400;color:#222;;-webkit-text-stroke:0.1px #222">1204 L’Anse Aux Pailles Rd, Providence, RI 02903</div><div class="t" style="left:13.70px;top:165.72px;font-size:11.2px;font-weight:400;color:#757575;">Single Family</div><div class="t" style="left:84.80px;top:165.72px;font-size:11.2px;font-weight:400;color:#757575;">·</div><div class="t" style="left:93.80px;top:165.72px;font-size:11.2px;font-weight:400;color:#757575;">Individual Owned</div>
<svg class="ico" style="left:13px;top:184px;stroke:#7a7a7a;stroke-width:1.05" width="260" height="14" viewBox="309 481 260 14">
<path d="M310.4 492 V487 H318.8 V492 M310.4 489.6 H318.8 M311.4 487 V482.8 H317.8 V487 M312.6 487 V485.2 H314.6 V487 M315 487 V485.2 H316.8 V487"/>
<path d="M371 489.2 C369.8 486 371.4 482.2 375 482.2 C377.6 482.2 379 484 379 486.4 V491.8 M372 485.6 L375.6 487.8 M371.6 491.6 L372 490.8 M373.8 490.6 L374.4 489.6"/>
<rect x="423.4" y="482.4" width="10.4" height="10.4" rx="1"/><path d="M423.4 487.4 H428.4 V492.8"/>
<path d="M511.8 482.2 C509 484.8 508.2 487.2 508.2 488.6 A3.6 3.6 0 0 0 515.4 488.6 C515.4 487.2 514.6 484.8 511.8 482.2 Z M511.8 486.2 V493 M509.6 493 H514"/>
</svg><div class="t" style="left:28.00px;top:184.43px;font-size:11.3px;font-weight:400;color:#757575;">11 bed</div><div class="t" style="left:87.30px;top:184.43px;font-size:11.3px;font-weight:400;color:#757575;">22 ba</div><div class="t" style="left:141.50px;top:184.43px;font-size:11.3px;font-weight:400;color:#757575;">10,922 sqft</div><div class="t" style="left:222.80px;top:184.43px;font-size:11.3px;font-weight:400;color:#757575;">1.35 ac</div><div class="a" style="left:13.70px;top:205.50px;width:48.90px;height:20.00px;border:1px solid #9a9a9a;border-radius:10px;background:#fff"></div><div class="t" style="left:13.70px;width:48.90px;text-align:center;top:210.54px;font-size:10.7px;color:#222">Vacant</div><div class="a" style="left:65.70px;top:205.50px;width:94.30px;height:20.00px;border:1px solid #9a9a9a;border-radius:10px;background:#fff"></div><div class="t" style="left:65.70px;width:94.30px;text-align:center;top:210.54px;font-size:10.7px;color:#222">Absentee Owner</div><div class="a" style="left:163.20px;top:205.50px;width:75.00px;height:20.00px;border:1px solid #9a9a9a;border-radius:10px;background:#fff"></div><div class="t" style="left:163.20px;width:75.00px;text-align:center;top:210.54px;font-size:10.7px;color:#222">Bank Owned</div><div class="a" style="left:241.60px;top:205.50px;width:27.40px;height:20.00px;border:1px solid #9a9a9a;border-radius:10px;background:#fff"></div><div class="t" style="left:241.60px;width:27.40px;text-align:center;top:210.54px;font-size:10.7px;color:#222">1+</div><div class="t" style="right:14.80px;top:143.04px;font-size:22.4px;font-weight:400;color:#111;-webkit-text-stroke:0.55px #111;letter-spacing:-0.42px">$325,000</div><div class="t" style="right:15.00px;top:170.10px;font-size:11.1px;font-weight:400;color:#757575;">List Price</div><div class="a" style="left:355.00px;top:198.00px;width:101.20px;height:28.00px;background:#f9dcdb;border-radius:4px"></div><div class="t" style="left:370.60px;top:205.24px;font-size:13.3px;font-weight:400;color:#222;;-webkit-text-stroke:0.1px #222">5</div><div class="t" style="left:384.40px;top:206.86px;font-size:10.8px;font-weight:400;color:#222;;-webkit-text-stroke:0.1px #222">BuyAbility<span style="font-size:7px;vertical-align:3.5px">™</span></div><div class="a" style="left:13.50px;top:240.00px;width:442.50px;height:1.00px;background:#ececec"></div><div class="t" style="left:13.70px;top:263.23px;font-size:11.3px;font-weight:400;color:#757575;">Appears in</div><div class="t" style="left:71.60px;top:262.47px;font-size:12.2px;font-weight:400;color:#222;-webkit-text-stroke:0.35px #222">2 lists</div><div class="a" style="left:341.50px;top:254.00px;width:114.10px;height:28.50px;border:1px solid #d9d9d9;border-radius:5px;background:#fff"></div><div class="t" style="left:350.70px;top:262.56px;font-size:12.1px;font-weight:400;color:#222;;-webkit-text-stroke:0.1px #222">Interest Shown</div><svg class="ico" style="left:437.00px;top:264px;stroke:#444;stroke-width:1.2" width="10" height="8" viewBox="0 0 10 8"><path d="M2.5 2.5 L5 5 L7.5 2.5"/></svg></div></div>
</div>
<div class="a" style="left:794.5px;top:286.5px;width:460px;height:591.5px;overflow:hidden;border-radius:0 0 0 8px">
<div class="a" style="left:9.90px;top:10.50px;width:473.20px;height:297px;background:#fff;border:1px solid #e2e2e2;border-radius:8px;box-shadow:0 1px 1.5px rgba(0,90,90,0.14)"><div class="a" style="left:0.6px;top:-1px;width:471px;height:296px"><div class="a" style="left:13.5px;top:14px;width:156px;height:104px;border-radius:6px;overflow:hidden"><svg width="156" height="104" viewBox="0 0 156 104"><use href="#kitchen"/></svg></div><div class="a" style="left:69.00px;top:104.40px;width:5.2px;height:5.2px;border-radius:50%;background:rgba(255,255,255,1)"></div><div class="a" style="left:79.50px;top:104.50px;width:5.0px;height:5.0px;border-radius:50%;background:rgba(255,255,255,0.55)"></div><div class="a" style="left:90.00px;top:104.50px;width:5.0px;height:5.0px;border-radius:50%;background:rgba(255,255,255,0.55)"></div><div class="a" style="left:100.50px;top:104.50px;width:5.0px;height:5.0px;border-radius:50%;background:rgba(255,255,255,0.55)"></div><div class="a" style="left:111.20px;top:105.20px;width:3.6px;height:3.6px;border-radius:50%;background:rgba(255,255,255,0.45)"></div><div class="a" style="left:13.5px;top:14px;width:15px;height:15.5px;background:#fff;border-bottom-right-radius:6px"></div><div class="a" style="left:9.5px;top:10px;width:13.8px;height:13.8px;border:1.5px solid #6e6e6e;border-radius:3px;background:#fff"></div><div class="a" style="left:184px;top:20.8px;width:8px;height:8px;border-radius:50%;background:#f7a30a"></div><div class="t" style="left:197.70px;top:18.16px;font-size:12.8px;font-weight:400;color:#1f1f1f;;-webkit-text-stroke:0.1px #1f1f1f">For Sale (on MLS)</div><div class="t" style="left:309.70px;top:18.80px;font-size:12.4px;font-weight:400;color:#757575;">Pending/Contingent</div><div class="t" style="left:184.00px;top:47.20px;font-size:13px;font-weight:400;color:#1f1f1f;;-webkit-text-stroke:0.1px #1f1f1f">$168</div><div class="t" style="left:184.00px;top:64.52px;font-size:11.2px;font-weight:400;color:#757575;">Price/SqFt</div><div class="t" style="left:283.40px;top:47.20px;font-size:13px;font-weight:400;color:#1f1f1f;;-webkit-text-stroke:0.1px #1f1f1f">$175</div><div class="t" style="left:283.40px;top:64.52px;font-size:11.2px;font-weight:400;color:#757575;">Est Price/SqFt</div><div class="t" style="right:15.00px;top:47.20px;font-size:13px;font-weight:400;color:#1f1f1f;;-webkit-text-stroke:0.1px #1f1f1f">22</div><div class="t" style="right:15.00px;top:64.52px;font-size:11.2px;font-weight:400;color:#757575;">DOM</div><div class="t" style="left:184.00px;top:86.40px;font-size:13px;font-weight:400;color:#1f1f1f;;-webkit-text-stroke:0.1px #1f1f1f">35%</div><div class="t" style="left:184.00px;top:103.52px;font-size:11.2px;font-weight:400;color:#757575;">Equity (%)</div><div class="t" style="left:283.40px;top:86.40px;font-size:13px;font-weight:400;color:#1f1f1f;;-webkit-text-stroke:0.1px #1f1f1f">$115,332</div><div class="t" style="left:283.40px;top:103.52px;font-size:11.2px;font-weight:400;color:#757575;">Equity ($)</div><div class="t" style="right:15.00px;top:86.40px;font-size:13px;font-weight:400;color:#1f1f1f;;-webkit-text-stroke:0.1px #1f1f1f">$329,520</div><div class="t" style="right:15.00px;top:103.52px;font-size:11.2px;font-weight:400;color:#757575;">Est Value</div><div class="a" style="left:13.50px;top:131.20px;width:442.50px;height:1.00px;background:#ececec"></div><svg class="ico" style="left:14px;top:148px;stroke:#333;stroke-width:1.2" width="10" height="11" viewBox="0 0 10 11"><path d="M5 10.2 C2.4 7.6 1.2 5.8 1.2 4 A3.8 3.8 0 0 1 8.8 4 C8.8 5.8 7.6 7.6 5 10.2 Z"/><circle cx="5" cy="4" r="1.3"/></svg><div class="t" style="left:27.70px;top:147.60px;font-size:11.1px;font-weight:400;color:#222;;-webkit-text-stroke:0.1px #222">1204 L’Anse Aux Pailles Rd, Providence, RI 02903</div><div class="t" style="left:13.70px;top:165.72px;font-size:11.2px;font-weight:400;color:#757575;">Single Family</div><div class="t" style="left:84.80px;top:165.72px;font-size:11.2px;font-weight:400;color:#757575;">·</div><div class="t" style="left:93.80px;top:165.72px;font-size:11.2px;font-weight:400;color:#757575;">Individual Owned</div>
<svg class="ico" style="left:13px;top:184px;stroke:#7a7a7a;stroke-width:1.05" width="260" height="14" viewBox="309 481 260 14">
<path d="M310.4 492 V487 H318.8 V492 M310.4 489.6 H318.8 M311.4 487 V482.8 H317.8 V487 M312.6 487 V485.2 H314.6 V487 M315 487 V485.2 H316.8 V487"/>
<path d="M371 489.2 C369.8 486 371.4 482.2 375 482.2 C377.6 482.2 379 484 379 486.4 V491.8 M372 485.6 L375.6 487.8 M371.6 491.6 L372 490.8 M373.8 490.6 L374.4 489.6"/>
<rect x="423.4" y="482.4" width="10.4" height="10.4" rx="1"/><path d="M423.4 487.4 H428.4 V492.8"/>
<path d="M511.8 482.2 C509 484.8 508.2 487.2 508.2 488.6 A3.6 3.6 0 0 0 515.4 488.6 C515.4 487.2 514.6 484.8 511.8 482.2 Z M511.8 486.2 V493 M509.6 493 H514"/>
</svg><div class="t" style="left:28.00px;top:184.43px;font-size:11.3px;font-weight:400;color:#757575;">11 bed</div><div class="t" style="left:87.30px;top:184.43px;font-size:11.3px;font-weight:400;color:#757575;">22 ba</div><div class="t" style="left:141.50px;top:184.43px;font-size:11.3px;font-weight:400;color:#757575;">10,922 sqft</div><div class="t" style="left:222.80px;top:184.43px;font-size:11.3px;font-weight:400;color:#757575;">1.35 ac</div><div class="a" style="left:13.70px;top:205.50px;width:48.90px;height:20.00px;border:1px solid #9a9a9a;border-radius:10px;background:#fff"></div><div class="t" style="left:13.70px;width:48.90px;text-align:center;top:210.54px;font-size:10.7px;color:#222">Vacant</div><div class="a" style="left:65.70px;top:205.50px;width:94.30px;height:20.00px;border:1px solid #9a9a9a;border-radius:10px;background:#fff"></div><div class="t" style="left:65.70px;width:94.30px;text-align:center;top:210.54px;font-size:10.7px;color:#222">Absentee Owner</div><div class="a" style="left:163.20px;top:205.50px;width:75.00px;height:20.00px;border:1px solid #9a9a9a;border-radius:10px;background:#fff"></div><div class="t" style="left:163.20px;width:75.00px;text-align:center;top:210.54px;font-size:10.7px;color:#222">Bank Owned</div><div class="a" style="left:241.60px;top:205.50px;width:27.40px;height:20.00px;border:1px solid #9a9a9a;border-radius:10px;background:#fff"></div><div class="t" style="left:241.60px;width:27.40px;text-align:center;top:210.54px;font-size:10.7px;color:#222">1+</div><div class="t" style="right:14.80px;top:143.04px;font-size:22.4px;font-weight:400;color:#111;-webkit-text-stroke:0.55px #111;letter-spacing:-0.42px">$325,000</div><div class="t" style="right:15.00px;top:170.10px;font-size:11.1px;font-weight:400;color:#757575;">List Price</div><div class="a" style="left:355.00px;top:198.00px;width:101.20px;height:28.00px;background:#f9dcdb;border-radius:4px"></div><div class="t" style="left:370.60px;top:205.24px;font-size:13.3px;font-weight:400;color:#222;;-webkit-text-stroke:0.1px #222">5</div><div class="t" style="left:384.40px;top:206.86px;font-size:10.8px;font-weight:400;color:#222;;-webkit-text-stroke:0.1px #222">BuyAbility<span style="font-size:7px;vertical-align:3.5px">™</span></div><div class="a" style="left:13.50px;top:240.00px;width:442.50px;height:1.00px;background:#ececec"></div><div class="t" style="left:13.70px;top:263.23px;font-size:11.3px;font-weight:400;color:#757575;">Appears in</div><div class="t" style="left:71.60px;top:262.47px;font-size:12.2px;font-weight:400;color:#222;-webkit-text-stroke:0.35px #222">2 lists</div><div class="a" style="left:361.10px;top:254.00px;width:94.50px;height:28.50px;border:1px solid #d9d9d9;border-radius:5px;background:#fff"></div><div class="t" style="left:370.30px;top:262.56px;font-size:12.1px;font-weight:400;color:#222;;-webkit-text-stroke:0.1px #222">Offer Made</div><svg class="ico" style="left:456.60px;top:264px;stroke:#444;stroke-width:1.2" width="10" height="8" viewBox="0 0 10 8"><path d="M2.5 2.5 L5 5 L7.5 2.5"/></svg></div></div>
<div class="a" style="left:9.90px;top:313.70px;width:473.20px;height:297px;background:#fff;border:1px solid #e2e2e2;border-radius:8px;box-shadow:0 1px 1.5px rgba(0,90,90,0.14)"><div class="a" style="left:0.6px;top:-1px;width:471px;height:296px"><div class="a" style="left:13.5px;top:14px;width:156px;height:104px;border-radius:6px;overflow:hidden"><svg width="156" height="104" viewBox="0 0 156 104"><use href="#house"/></svg></div><div class="a" style="left:69.00px;top:104.40px;width:5.2px;height:5.2px;border-radius:50%;background:rgba(255,255,255,1)"></div><div class="a" style="left:79.50px;top:104.50px;width:5.0px;height:5.0px;border-radius:50%;background:rgba(255,255,255,0.55)"></div><div class="a" style="left:90.00px;top:104.50px;width:5.0px;height:5.0px;border-radius:50%;background:rgba(255,255,255,0.55)"></div><div class="a" style="left:100.50px;top:104.50px;width:5.0px;height:5.0px;border-radius:50%;background:rgba(255,255,255,0.55)"></div><div class="a" style="left:111.20px;top:105.20px;width:3.6px;height:3.6px;border-radius:50%;background:rgba(255,255,255,0.45)"></div><div class="a" style="left:13.5px;top:14px;width:15px;height:15.5px;background:#fff;border-bottom-right-radius:6px"></div><div class="a" style="left:9.5px;top:10px;width:13.8px;height:13.8px;border:1.5px solid #6e6e6e;border-radius:3px;background:#fff"></div><div class="a" style="left:184px;top:20.8px;width:8px;height:8px;border-radius:50%;background:#1fb8d0"></div><div class="t" style="left:197.70px;top:17.17px;font-size:13.5px;font-weight:400;color:#1f1f1f;;-webkit-text-stroke:0.1px #1f1f1f">Off Market (motivated)</div><div class="t" style="left:184.00px;top:47.20px;font-size:13px;font-weight:400;color:#1f1f1f;;-webkit-text-stroke:0.1px #1f1f1f">09/30/2020</div><div class="t" style="left:184.00px;top:64.52px;font-size:11.2px;font-weight:400;color:#757575;">Last Sold Date</div><div class="t" style="left:283.40px;top:47.20px;font-size:13px;font-weight:400;color:#1f1f1f;;-webkit-text-stroke:0.1px #1f1f1f">N/A</div><div class="t" style="left:283.40px;top:64.52px;font-size:11.2px;font-weight:400;color:#757575;">Last Sold Price</div><div class="t" style="left:184.00px;top:86.40px;font-size:13px;font-weight:400;color:#1f1f1f;;-webkit-text-stroke:0.1px #1f1f1f">$175</div><div class="t" style="left:184.00px;top:103.52px;font-size:11.2px;font-weight:400;color:#757575;">Est Price/SqFt</div><div class="t" style="left:283.40px;top:86.40px;font-size:13px;font-weight:400;color:#1f1f1f;;-webkit-text-stroke:0.1px #1f1f1f">35%</div><div class="t" style="left:283.40px;top:103.52px;font-size:11.2px;font-weight:400;color:#757575;">Equity (%)</div><div class="t" style="right:15.00px;top:86.40px;font-size:13px;font-weight:400;color:#1f1f1f;;-webkit-text-stroke:0.1px #1f1f1f">$115,332</div><div class="t" style="right:15.00px;top:103.52px;font-size:11.2px;font-weight:400;color:#757575;">Equity ($)</div><div class="a" style="left:13.50px;top:131.20px;width:442.50px;height:1.00px;background:#ececec"></div><svg class="ico" style="left:14px;top:148px;stroke:#333;stroke-width:1.2" width="10" height="11" viewBox="0 0 10 11"><path d="M5 10.2 C2.4 7.6 1.2 5.8 1.2 4 A3.8 3.8 0 0 1 8.8 4 C8.8 5.8 7.6 7.6 5 10.2 Z"/><circle cx="5" cy="4" r="1.3"/></svg><div class="t" style="left:27.70px;top:147.60px;font-size:11.1px;font-weight:400;color:#222;;-webkit-text-stroke:0.1px #222">1204 L’Anse Aux Pailles Rd, Providence, RI 02903</div><div class="t" style="left:13.70px;top:165.72px;font-size:11.2px;font-weight:400;color:#757575;">Single Family</div><div class="t" style="left:84.80px;top:165.72px;font-size:11.2px;font-weight:400;color:#757575;">·</div><div class="t" style="left:93.80px;top:165.72px;font-size:11.2px;font-weight:400;color:#757575;">Individual Owned</div>
<svg class="ico" style="left:13px;top:184px;stroke:#7a7a7a;stroke-width:1.05" width="260" height="14" viewBox="309 481 260 14">
<path d="M310.4 492 V487 H318.8 V492 M310.4 489.6 H318.8 M311.4 487 V482.8 H317.8 V487 M312.6 487 V485.2 H314.6 V487 M315 487 V485.2 H316.8 V487"/>
<path d="M371 489.2 C369.8 486 371.4 482.2 375 482.2 C377.6 482.2 379 484 379 486.4 V491.8 M372 485.6 L375.6 487.8 M371.6 491.6 L372 490.8 M373.8 490.6 L374.4 489.6"/>
<rect x="423.4" y="482.4" width="10.4" height="10.4" rx="1"/><path d="M423.4 487.4 H428.4 V492.8"/>
<path d="M511.8 482.2 C509 484.8 508.2 487.2 508.2 488.6 A3.6 3.6 0 0 0 515.4 488.6 C515.4 487.2 514.6 484.8 511.8 482.2 Z M511.8 486.2 V493 M509.6 493 H514"/>
</svg><div class="t" style="left:28.00px;top:184.43px;font-size:11.3px;font-weight:400;color:#757575;">11 bed</div><div class="t" style="left:87.30px;top:184.43px;font-size:11.3px;font-weight:400;color:#757575;">22 ba</div><div class="t" style="left:141.50px;top:184.43px;font-size:11.3px;font-weight:400;color:#757575;">10,922 sqft</div><div class="t" style="left:222.80px;top:184.43px;font-size:11.3px;font-weight:400;color:#757575;">1.35 ac</div><div class="a" style="left:13.70px;top:205.50px;width:48.90px;height:20.00px;border:1px solid #9a9a9a;border-radius:10px;background:#fff"></div><div class="t" style="left:13.70px;width:48.90px;text-align:center;top:210.54px;font-size:10.7px;color:#222">Vacant</div><div class="a" style="left:65.70px;top:205.50px;width:94.30px;height:20.00px;border:1px solid #9a9a9a;border-radius:10px;background:#fff"></div><div class="t" style="left:65.70px;width:94.30px;text-align:center;top:210.54px;font-size:10.7px;color:#222">Absentee Owner</div><div class="a" style="left:163.20px;top:205.50px;width:75.00px;height:20.00px;border:1px solid #9a9a9a;border-radius:10px;background:#fff"></div><div class="t" style="left:163.20px;width:75.00px;text-align:center;top:210.54px;font-size:10.7px;color:#222">Bank Owned</div><div class="a" style="left:241.60px;top:205.50px;width:27.40px;height:20.00px;border:1px solid #9a9a9a;border-radius:10px;background:#fff"></div><div class="t" style="left:241.60px;width:27.40px;text-align:center;top:210.54px;font-size:10.7px;color:#222">1+</div><div class="t" style="right:14.80px;top:143.04px;font-size:22.4px;font-weight:400;color:#111;-webkit-text-stroke:0.55px #111;letter-spacing:-0.42px">$325,000</div><div class="t" style="right:15.00px;top:170.10px;font-size:11.1px;font-weight:400;color:#757575;">Est Value</div><div class="a" style="left:355.00px;top:198.00px;width:101.20px;height:28.00px;background:#dcf5cf;border-radius:4px"></div><div class="t" style="left:367.00px;top:205.24px;font-size:13.3px;font-weight:400;color:#222;;-webkit-text-stroke:0.1px #222">46</div><div class="t" style="left:388.60px;top:206.86px;font-size:10.8px;font-weight:400;color:#222;;-webkit-text-stroke:0.1px #222">BuyAbility<span style="font-size:7px;vertical-align:3.5px">™</span></div><div class="a" style="left:13.50px;top:240.00px;width:442.50px;height:1.00px;background:#ececec"></div><div class="t" style="left:13.70px;top:263.23px;font-size:11.3px;font-weight:400;color:#757575;">Appears in</div><div class="t" style="left:71.60px;top:262.47px;font-size:12.2px;font-weight:400;color:#222;-webkit-text-stroke:0.35px #222">2 lists</div><div class="a" style="left:361.10px;top:254.00px;width:94.50px;height:28.50px;border:1px solid #d9d9d9;border-radius:5px;background:#fff"></div><div class="t" style="left:370.30px;top:262.56px;font-size:12.1px;font-weight:400;color:#222;;-webkit-text-stroke:0.1px #222">Offer Made</div><svg class="ico" style="left:456.60px;top:264px;stroke:#444;stroke-width:1.2" width="10" height="8" viewBox="0 0 10 8"><path d="M2.5 2.5 L5 5 L7.5 2.5"/></svg></div></div>
</div>

</body></html>
